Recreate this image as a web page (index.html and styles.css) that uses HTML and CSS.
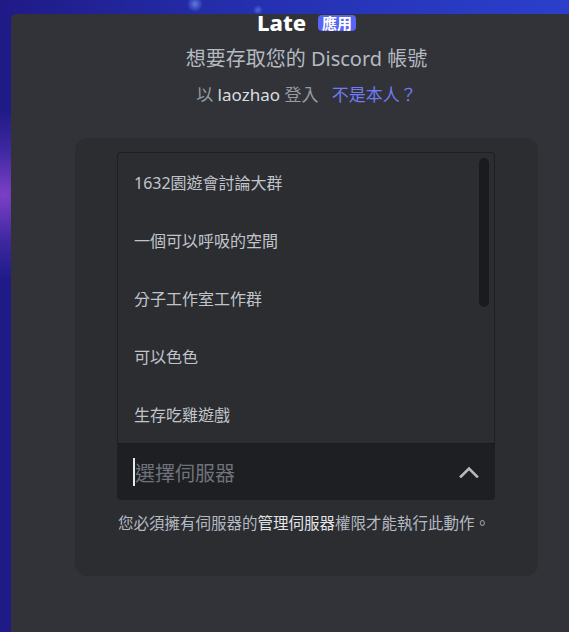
FILE: index.html
```html
<!DOCTYPE html>
<html lang="zh-Hant">
<head>
    <meta charset="UTF-8">
    <title>授權應用程式</title>
    <link rel="stylesheet" href="styles.css">
</head>
<body>
<div class="modal">
    <div class="title">
        <span class="app-name">Late</span>
        <span class="badge">應用</span>
    </div>
    <div class="subtitle">想要存取您的 Discord 帳號</div>
    <div class="login-as">以 <span class="user">laozhao</span> 登入 <a class="switch" href="#">不是本人？</a></div>

    <div class="card">
        <div class="list">
            <div class="option">1632園遊會討論大群</div>
            <div class="option">一個可以呼吸的空間</div>
            <div class="option">分子工作室工作群</div>
            <div class="option">可以色色</div>
            <div class="option">生存吃雞遊戲</div>
            <div class="scroll-thumb"></div>
        </div>
        <div class="select">
            <span class="caret"></span>
            <span class="placeholder">選擇伺服器</span>
            <svg class="chevron" width="20" height="12" viewBox="0 0 20 12">
                <path d="M2 10.5 L10 2.5 L18 10.5" fill="none" stroke="#b5bac1" stroke-width="2.6" stroke-linecap="square"/>
            </svg>
        </div>
        <p class="hint">您必須擁有伺服器的<strong>管理伺服器</strong>權限才能執行此動作。</p>
    </div>
</div>
</body>
</html>
```

FILE: styles.css
```css
html, body {
    height: 100%;
}

body {
    margin: 0;
    padding: 14px 0 0 11px;
    box-sizing: border-box;
    overflow: hidden;
    font-family: "Noto Sans", "Noto Sans CJK TC", sans-serif;
    background:
        radial-gradient(circle at 4px 195px, rgba(140, 70, 210, 0.85) 0, rgba(110, 60, 200, 0.4) 45px, transparent 85px),
        radial-gradient(circle at 195px 4px, rgba(110, 140, 240, 0.8) 0, transparent 8px),
        radial-gradient(circle at 258px 10px, rgba(110, 140, 240, 0.6) 0, transparent 5px),
        linear-gradient(90deg, #1f1a86 0%, #2530b0 45%, #2b3fcc 100%);
    background-color: #1e1880;
}

/* the dialog is wider than the window, so its centre sits right of the middle */
.modal {
    width: 558px;
    height: 618px;
    padding-left: 33px;
    box-sizing: border-box;
    background: #313338;
    border-radius: 5px 0 0 0;
    text-align: center;
}

.title {
    display: flex;
    justify-content: center;
    align-items: center;
    gap: 12px;
    height: 17px;
}

.app-name {
    font-size: 22px;
    font-weight: 800;
    color: #fff;
    line-height: 17px;
}

.badge {
    display: inline-block;
    height: 16px;
    line-height: 16px;
    padding: 0 4px;
    border-radius: 4px;
    background: #5865f2;
    color: #fff;
    font-size: 15px;
    font-weight: 700;
}

.subtitle {
    margin-top: 16px;
    font-size: 20px;
    line-height: 24px;
    color: #b5bac1;
}

.login-as {
    margin-top: 14px;
    font-size: 17px;
    line-height: 20px;
    color: #949ba4;
}

.user {
    color: #dbdee1;
}

.switch {
    margin-left: 9px;
    color: #6f7cf4;
    text-decoration: none;
}

.card {
    width: 463px;
    margin: 33px auto 0;
    padding: 14px 43px 44px 42px;
    box-sizing: border-box;
    background: #2b2d31;
    border-radius: 12px;
    text-align: left;
}

.list {
    position: relative;
    border: 1px solid #1e1f22;
    border-bottom: none;
    border-radius: 4px 4px 0 0;
    background: #2b2d31;
}

.option {
    display: flex;
    align-items: center;
    height: 58px;
    padding-left: 16px;
    font-size: 16px;
    color: #c1c5cb;
}

.scroll-thumb {
    position: absolute;
    top: 5px;
    right: 5px;
    width: 10px;
    height: 149px;
    border-radius: 5px;
    background: #1a1b1e;
}

.select {
    display: flex;
    align-items: center;
    height: 57px;
    padding: 0 16px 0 16px;
    background: #1e1f22;
    border-radius: 0 0 4px 4px;
    border-top: 1px solid #1a1b1e;
    box-sizing: border-box;
}

.caret {
    width: 2px;
    height: 28px;
    background: #e8e9eb;
}

.placeholder {
    flex: 1;
    font-size: 20px;
    color: #70737b;
}

.chevron {
    display: block;
}

.hint {
    margin: 14px 0 0 1px;
    font-size: 15.5px;
    line-height: 18px;
    color: #b5bac1;
    white-space: nowrap;
}

.hint strong {
    font-weight: 400;
    color: #e3e5e8;
}
```
